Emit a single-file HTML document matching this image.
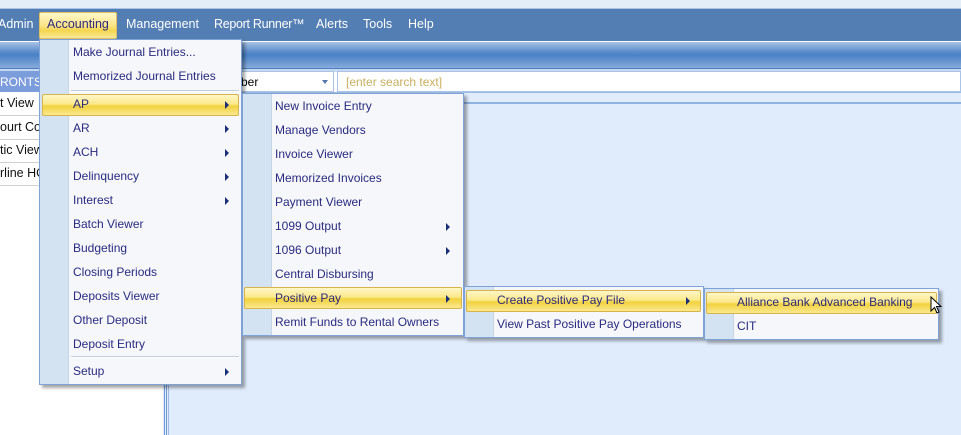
<!DOCTYPE html>
<html><head><meta charset="utf-8"><style>
*{margin:0;padding:0;box-sizing:border-box}
body{width:961px;height:435px;overflow:hidden;position:relative;background:#fff;font-family:"Liberation Sans",sans-serif;font-size:12px}
.a{position:absolute}
.mb span{position:absolute;color:#fff;font-size:12.5px;white-space:nowrap}
.menu{position:absolute;background:#f5f7fa;border:1px solid #7fa3d6;box-shadow:3px 3px 3px rgba(0,0,0,.35)}
.ic{position:absolute;left:0;top:0;bottom:0;width:29px;background:#d4e3f2;border-right:1px solid #c5d6ea}
.it{position:absolute;color:#2b2a80;white-space:nowrap}
.hl{position:absolute;border:1px solid #d8b24a;border-radius:2px;background:linear-gradient(#fff6c8 0%,#fbe98a 45%,#f2d23e 55%,#fae98e 100%)}
.ar{position:absolute;width:0;height:0;border-left:4px solid #1b2f78;border-top:4px solid transparent;border-bottom:4px solid transparent}
.sep{position:absolute;height:2px;border-top:1px solid #c5cfdc;border-bottom:1px solid #fff}
.row{position:absolute;left:0;width:163px;height:24px;border-bottom:1px solid #d0d0d0;color:#111;font-size:12.5px;padding:4px 0 0 0;white-space:nowrap;overflow:hidden}
</style></head><body>
<div class="a" style="left:0;top:0;width:961px;height:9px;background:#e3eef9;border-bottom:1px solid #a9c4e6"></div>
<div class="a mb" style="left:0;top:9px;width:961px;height:32px;background:#537eb3">
<div class="a" style="left:39px;top:3px;width:78px;height:27px;border:1px solid #e0c060;border-radius:2px;background:linear-gradient(#fff8cc,#fbe487 50%,#f4d64e 70%,#fae99a)"></div>
<span style="left:-2px;top:8px">Admin</span>
<span style="left:47px;top:8px;color:#2b2a80">Accounting</span>
<span style="left:126px;top:8px">Management</span>
<span style="left:214px;top:8px;letter-spacing:-0.3px">Report Runner™</span>
<span style="left:316px;top:8px">Alerts</span>
<span style="left:363px;top:8px">Tools</span>
<span style="left:408px;top:8px">Help</span>
</div>
<div class="a" style="left:0;top:41px;width:961px;height:1px;background:#fff"></div>
<div class="a" style="left:0;top:42px;width:961px;height:27px;background:linear-gradient(#a9c3e6,#5f8fcc 35%,#4a82c6 50%,#87abdc);border-bottom:1px solid #4c7fc0"></div>
<div class="a" style="left:0;top:69px;width:961px;height:3px;background:#c6d8ef"></div>
<div class="a" style="left:0;top:71px;width:163px;height:21px;background:#7c9ddc;color:#fff;font-size:12px;padding:4px 0 0 0;white-space:nowrap;overflow:hidden">RONTSTE</div>
<div class="a" style="left:200px;top:71px;width:134px;height:21px;border:1px solid #a9c4e6;background:#fff;padding:3px 0 0 40px;font-size:12px">ber<span style="position:absolute;right:5px;top:8px;border-top:4px solid #5577aa;border-left:3px solid transparent;border-right:3px solid transparent"></span></div>
<div class="a" style="left:337px;top:71px;width:624px;height:21px;border:1px solid #a9c4e6;background:#fff;color:#c8b060;padding:3px 0 0 8px;font-size:12px">[enter search text]</div>
<div class="row" style="top:92px">t View</div>
<div class="row" style="top:116px">ourt Cor</div>
<div class="row" style="top:139px">tic View</div>
<div class="row" style="top:162px">rline HO</div>
<div class="a" style="left:163px;top:92px;width:798px;height:343px;background:#e0ecfc"></div>
<div class="a" style="left:163px;top:92px;width:798px;height:1px;background:#9dbbe2"></div>
<div class="a" style="left:163px;top:102px;width:798px;height:2px;background:#8fb2e0"></div>
<div class="a" style="left:164px;top:92px;width:1px;height:343px;background:#6f9ad3"></div>
<div class="a" style="left:166px;top:92px;width:1px;height:343px;background:#6f9ad3"></div>
<div class="a" style="left:168px;top:104px;width:1px;height:331px;background:#9dbbe2"></div>

<!-- menu 1 -->
<div class="menu" style="left:39px;top:39px;width:203px;height:346px">
<div class="ic"></div>
<div class="sep" style="left:31px;top:50px;width:168px"></div>
<div class="sep" style="left:31px;top:316px;width:168px"></div>
<div class="hl" style="left:2px;top:54px;width:197px;height:22px"></div>
<div class="it" style="left:33px;top:5px">Make Journal Entries...</div>
<div class="it" style="left:33px;top:29px">Memorized Journal Entries</div>
<div class="it" style="left:33px;top:57px">AP</div>
<div class="it" style="left:33px;top:81px">AR</div>
<div class="it" style="left:33px;top:105px">ACH</div>
<div class="it" style="left:33px;top:129px">Delinquency</div>
<div class="it" style="left:33px;top:153px">Interest</div>
<div class="it" style="left:33px;top:177px">Batch Viewer</div>
<div class="it" style="left:33px;top:201px">Budgeting</div>
<div class="it" style="left:33px;top:225px">Closing Periods</div>
<div class="it" style="left:33px;top:249px">Deposits Viewer</div>
<div class="it" style="left:33px;top:273px">Other Deposit</div>
<div class="it" style="left:33px;top:297px">Deposit Entry</div>
<div class="it" style="left:33px;top:324px">Setup</div>
<div class="ar" style="left:185px;top:61px"></div>
<div class="ar" style="left:185px;top:85px"></div>
<div class="ar" style="left:185px;top:109px"></div>
<div class="ar" style="left:185px;top:133px"></div>
<div class="ar" style="left:185px;top:157px"></div>
<div class="ar" style="left:185px;top:328px"></div>
</div>

<!-- menu 2 -->
<div class="menu" style="left:242px;top:93px;width:222px;height:243px">
<div class="ic"></div>
<div class="hl" style="left:1px;top:193px;width:218px;height:22px"></div>
<div class="it" style="left:32px;top:5px">New Invoice Entry</div>
<div class="it" style="left:32px;top:29px">Manage Vendors</div>
<div class="it" style="left:32px;top:53px">Invoice Viewer</div>
<div class="it" style="left:32px;top:77px">Memorized Invoices</div>
<div class="it" style="left:32px;top:101px">Payment Viewer</div>
<div class="it" style="left:32px;top:125px">1099 Output</div>
<div class="it" style="left:32px;top:149px">1096 Output</div>
<div class="it" style="left:32px;top:173px">Central Disbursing</div>
<div class="it" style="left:32px;top:197px">Positive Pay</div>
<div class="it" style="left:32px;top:221px">Remit Funds to Rental Owners</div>
<div class="ar" style="left:203px;top:129px"></div>
<div class="ar" style="left:203px;top:153px"></div>
<div class="ar" style="left:203px;top:201px"></div>
</div>

<!-- menu 3 -->
<div class="menu" style="left:464px;top:286px;width:240px;height:52px">
<div class="ic"></div>
<div class="hl" style="left:1px;top:3px;width:235px;height:22px"></div>
<div class="it" style="left:32px;top:6px">Create Positive Pay File</div>
<div class="it" style="left:32px;top:30px">View Past Positive Pay Operations</div>
<div class="ar" style="left:221px;top:10px"></div>
</div>

<!-- menu 4 -->
<div class="menu" style="left:704px;top:288px;width:235px;height:52px">
<div class="ic"></div>
<div class="hl" style="left:1px;top:3px;width:231px;height:22px"></div>
<div class="it" style="left:32px;top:6px">Alliance Bank Advanced Banking</div>
<div class="it" style="left:32px;top:30px">CIT</div>
</div>
<svg class="a" style="left:930px;top:296px" width="14" height="20" viewBox="0 0 14 20"><path d="M1 1 L1 15 L4.5 11.5 L7 17 L9 16 L6.5 10.5 L11 10.5 Z" fill="#fff" stroke="#000" stroke-width="1"/></svg>
</body></html>
